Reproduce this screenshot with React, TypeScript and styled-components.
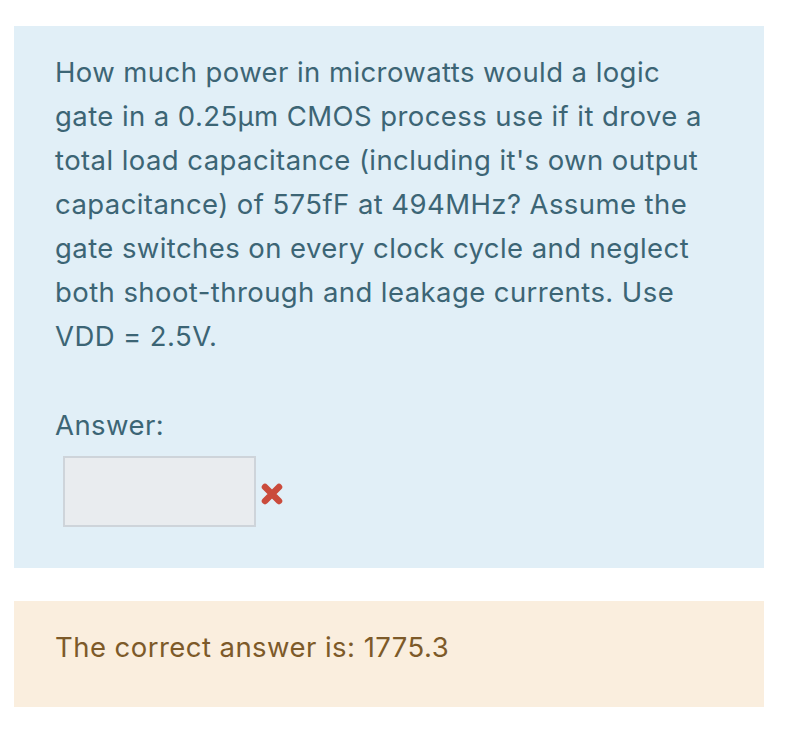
import React from "react";
import styled, { createGlobalStyle } from "styled-components";

const Global = createGlobalStyle`
  html, body { margin: 0; padding: 0; background: #ffffff; }
  body { font-family: Inter, "Open Sans", "Liberation Sans", sans-serif; }
`;

const Page = styled.div`
  width: 790px;
  padding: 26px 26px 0 14px;
  box-sizing: border-box;
  display: flex;
  flex-direction: column;
  gap: 33px;
`;

const Formulation = styled.div`
  background: #e1eff7;
  color: #3c6575;
  padding: 24px 41px 41px 41px;
  font-size: 27.5px;
  line-height: 44px;
  letter-spacing: 0.42px;
`;

const QText = styled.p`
  margin: 0;
`;

const AnswerLabel = styled.div`
  margin-top: 45px;
`;

const AnswerRow = styled.div`
  display: flex;
  align-items: center;
  gap: 4px;
  margin-top: 9px;
  padding-left: 8px;
`;

const Input = styled.div`
  width: 193px;
  height: 71px;
  box-sizing: border-box;
  background: #e9ecef;
  border: 2px solid #ced4da;
`;

const Feedback = styled.div`
  background: #faeede;
  color: #7d5a29;
  padding: 24px 41px 38px 41px;
  font-size: 27.5px;
  line-height: 44px;
  letter-spacing: 0.45px;
`;

const Cross = () => (
  <svg width="24" height="24" viewBox="0 0 24 24" style={{ marginTop: 4 }}>
    <path d="M5 5 L19 19 M19 5 L5 19" stroke="#ca4b3c" strokeWidth="6.5" strokeLinecap="round" />
  </svg>
);

export default function App() {
  return (
    <>
      <Global />
      <Page>
        <Formulation>
          <QText>
            How much power in microwatts would a logic gate in a 0.25µm CMOS process use if it drove a
            total load capacitance (including it's own output capacitance) of 575fF at 494MHz? Assume the
            gate switches on every clock cycle and neglect both shoot-through and leakage currents. Use
            VDD = 2.5V.
          </QText>
          <AnswerLabel>Answer:</AnswerLabel>
          <AnswerRow>
            <Input />
            <Cross />
          </AnswerRow>
        </Formulation>
        <Feedback>The correct answer is: 1775.3</Feedback>
      </Page>
    </>
  );
}
